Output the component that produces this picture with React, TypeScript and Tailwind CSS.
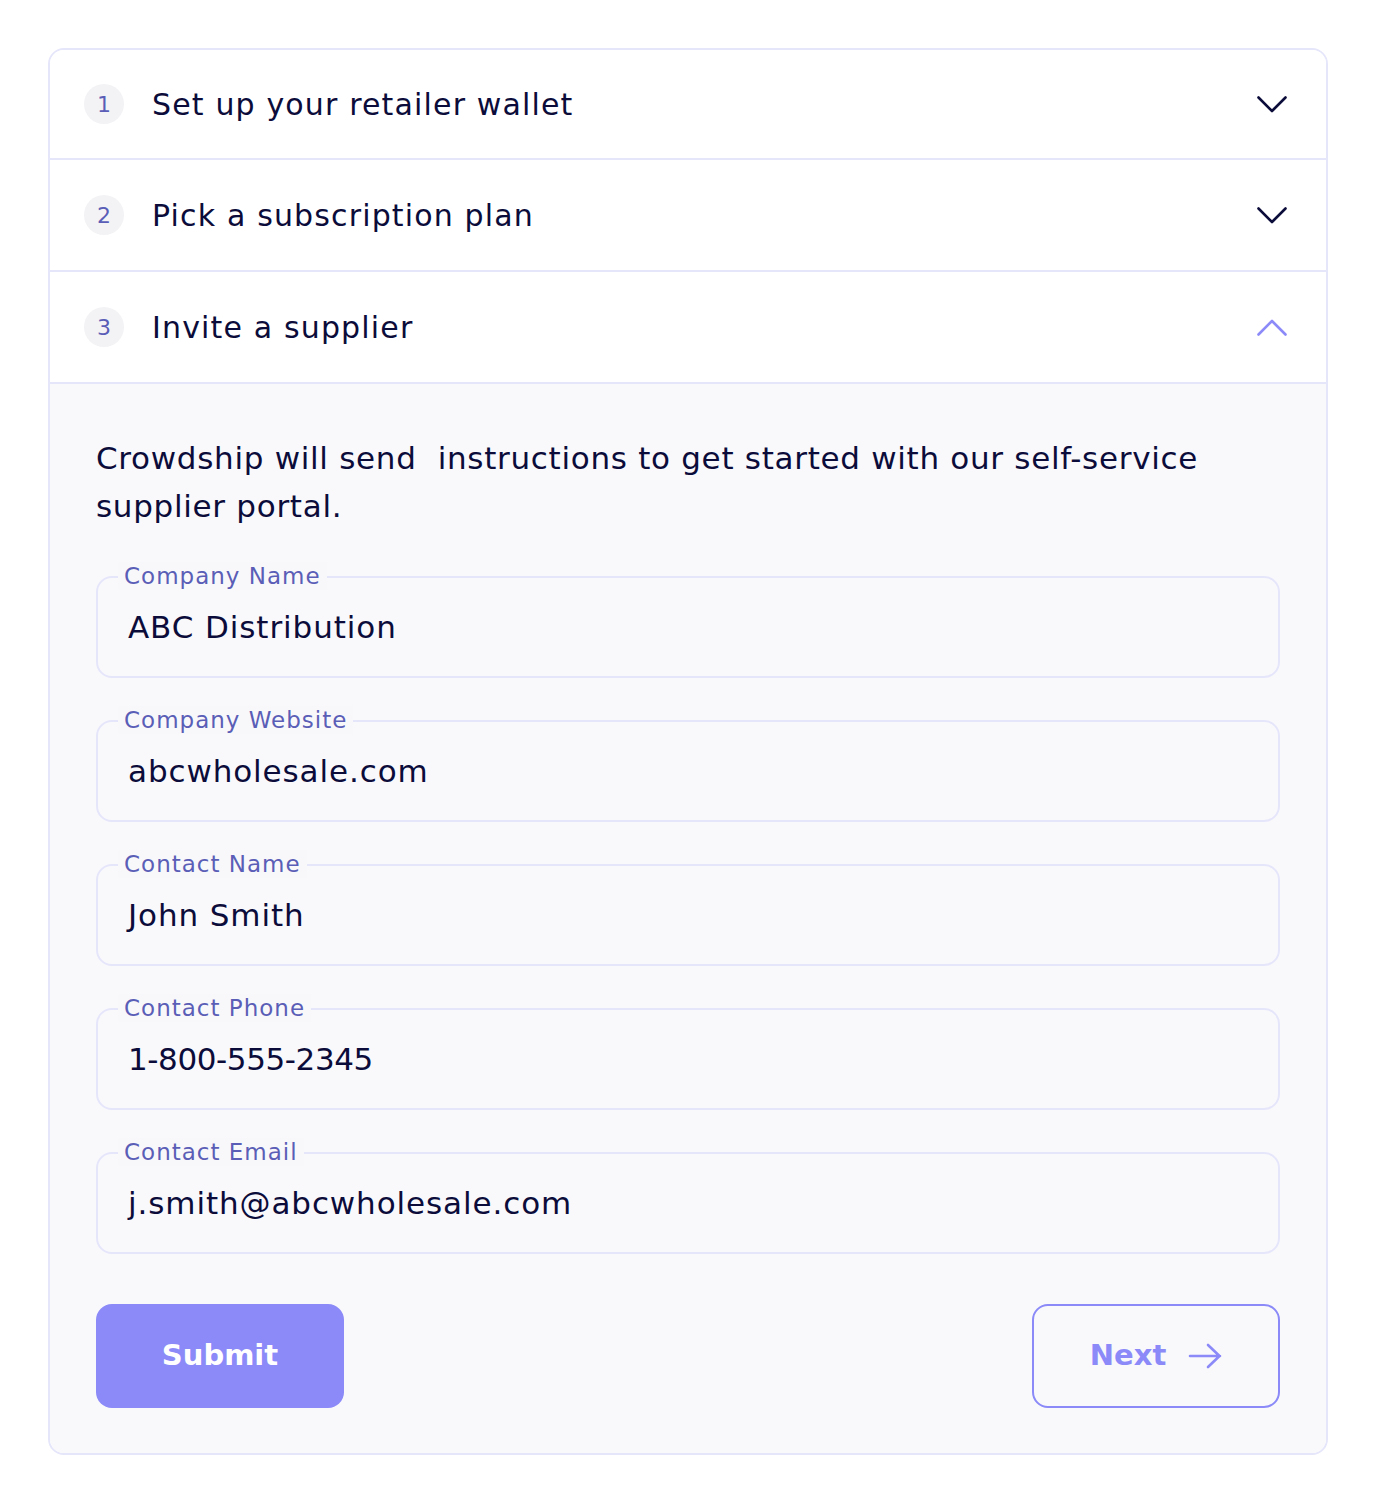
import { ReactNode } from 'react'

const FONT = "font-['DejaVu_Sans',sans-serif]"

function Chevron({ up = false }: { up?: boolean }) {
  return (
    <svg
      width="30"
      height="17"
      viewBox="0 0 30 17"
      fill="none"
      className={up ? 'text-[#8b8af8]' : 'text-[#0c0c3a]'}
    >
      <polyline
        points={up ? '1.5,15.5 15,2 28.5,15.5' : '1.5,1.5 15,15 28.5,1.5'}
        stroke="currentColor"
        strokeWidth="2.6"
        strokeLinecap="round"
        strokeLinejoin="round"
      />
    </svg>
  )
}

function StepRow({
  n,
  title,
  open = false,
  first = false,
}: {
  n: number
  title: string
  open?: boolean
  first?: boolean
}) {
  return (
    <div
      className={`flex items-center ${
        first ? 'h-[110px]' : 'h-[112px]'
      } pl-[34px] pr-[39px] border-b-2 border-[#e6e6fb] bg-white`}
    >
      <span className="w-10 h-10 rounded-full bg-[#f3f3f6] flex items-center justify-center text-[22px] text-[#5b5eb6]">
        {n}
      </span>
      <span className="ml-7 flex-1 text-[30px] tracking-[1.15px] text-[#0c0c3a]">{title}</span>
      <Chevron up={open} />
    </div>
  )
}

function Field({ label, value, tight = false }: { label: string; value: ReactNode; tight?: boolean }) {
  return (
    <div className="relative">
      <span className="absolute left-[22px] -top-[14px] px-1.5 bg-[#f8f8fb] text-[23px] leading-[28px] tracking-[1px] text-[#5b5eb6]">
        {label}
      </span>
      <div
        className={`h-[102px] rounded-2xl border-2 border-[#e6e6fb] flex items-center pl-[30px] text-[31px] ${
          tight ? 'tracking-[-0.4px]' : 'tracking-[0.9px]'
        } text-[#0c0c3a]`}
      >
        {value}
      </div>
    </div>
  )
}

export default function App() {
  return (
    <div className={`min-h-screen bg-white px-12 pt-12 pb-12 ${FONT}`}>
      <div className="rounded-2xl border-2 border-[#e6e6fb] overflow-hidden">
        <StepRow n={1} title="Set up your retailer wallet" first />
        <StepRow n={2} title="Pick a subscription plan" />
        <StepRow n={3} title="Invite a supplier" open />

        <div className="bg-[#f9f9fc] px-[46px] pt-[50px] pb-[45px]">
          <p className="text-[31px] leading-[48px] tracking-[0.7px] text-[#0c0c3a]">
            Crowdship will send{'\u00a0'} instructions to get started with our self-service
            <br />
            supplier portal.
          </p>

          <div className="mt-[46px] flex flex-col gap-[42px]">
            <Field label="Company Name" value="ABC Distribution" />
            <Field label="Company Website" value="abcwholesale.com" />
            <Field label="Contact Name" value="John Smith" />
            <Field label="Contact Phone" value="1-800-555-2345" tight />
            <Field label="Contact Email" value="j.smith@abcwholesale.com" />
          </div>

          <div className="mt-[50px] flex items-center justify-between">
            <button className="w-[248px] h-[104px] rounded-2xl bg-[#8b8af8] text-white text-[29px] font-semibold">
              Submit
            </button>
            <button className="w-[248px] h-[104px] rounded-2xl border-2 border-[#8b8af8] text-[#8b8af8] text-[29px] font-semibold flex items-center justify-center gap-[22px]">
              Next
              <svg width="34" height="26" viewBox="0 0 34 26" fill="none">
                <path
                  d="M2 13h30M20 2l11.5 11L20 24"
                  stroke="currentColor"
                  strokeWidth="2.6"
                  strokeLinecap="round"
                  strokeLinejoin="round"
                />
              </svg>
            </button>
          </div>
        </div>
      </div>
    </div>
  )
}
